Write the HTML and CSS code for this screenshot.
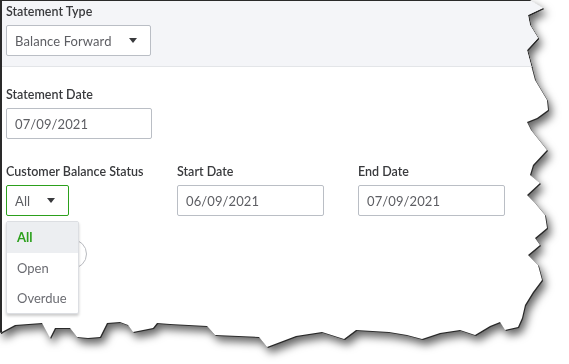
FILE: index.html
```html
<!DOCTYPE html>
<html lang="en">
<head>
  <meta charset="UTF-8" />
  <title>Statement Options</title>
  <link rel="stylesheet" href="styles.css">
</head>
<body>
  <div class="page">
    <div class="sheet">

      <!-- Tipo de extrato -->
      <div class="band">
        <label class="field-label">Statement Type</label>
        <div class="select select-type">
          <span>Balance Forward</span>
          <svg class="caret" width="8" height="5" viewBox="0 0 8 5"><path d="M0 0h8L4 5z" fill="#393a3d"/></svg>
        </div>
      </div>

      <div class="section">
        <label class="field-label">Statement Date</label>
        <div class="input date-single">07/09/2021</div>
      </div>

      <div class="section row">
        <div class="col">
          <label class="field-label">Customer Balance Status</label>
          <div class="select-wrap">
            <div class="select select-status">
              <span>All</span>
              <svg class="caret" width="8" height="5" viewBox="0 0 8 5"><path d="M0 0h8L4 5z" fill="#393a3d"/></svg>
            </div>
            <ul class="menu">
              <li class="menu-item selected">All</li>
              <li class="menu-item">Open</li>
              <li class="menu-item">Overdue</li>
            </ul>
          </div>
        </div>
        <div class="col">
          <label class="field-label">Start Date</label>
          <div class="input">06/09/2021</div>
        </div>
        <div class="col">
          <label class="field-label">End Date</label>
          <div class="input">07/09/2021</div>
        </div>
      </div>

      <div class="section">
        <button class="btn-apply">Apply</button>
      </div>

    </div>
  </div>
</body>
</html>
```

FILE: styles.css
```css
body {
  margin: 0;
  background-color: #ffffff;
  font-family: Lato, "Open Sans", Arial, sans-serif;
  font-size: 13px;
  color: #393a3d;
}

/* papel rasgado: o contorno e a sombra vem do filtro */
.page {
  width: 569px;
  height: 364px;
  filter: drop-shadow(1px 1px 0 #2a2a2a) drop-shadow(3px 5px 4px rgba(0, 0, 0, 0.6));
}

.sheet {
  height: 350px;
  background-color: #ffffff;
  border-top: 1px solid #2a2a2a;
  border-left: 2px solid #2a2a2a;
  box-sizing: border-box;
  clip-path: polygon(
    0 0, 530px 0, 543px 8px, 528px 15px, 530px 25px, 538px 38px, 527px 50px,
    531px 65px, 535px 80px, 547px 100px, 548px 110px, 537px 118px, 527px 122px,
    531px 130px, 547px 150px, 533px 165px, 530px 175px, 540px 183px, 527px 195px,
    535px 203px, 545px 215px, 547px 228px, 535px 238px, 540px 245px, 528px 255px,
    538px 265px, 542px 280px, 533px 292px, 525px 305px, 522px 318px, 518px 327px,
    505px 330px, 500px 322px, 490px 326px, 475px 335px, 460px 330px, 440px 333px,
    422px 339px, 407px 335px, 389px 332px, 356px 330px, 344px 339px, 322px 332px,
    296px 336px, 267px 347px, 259px 337px, 215px 335px, 207px 326px, 170px 324px,
    157px 323px, 153px 328px, 133px 332px, 128px 325px, 120px 322px, 107px 323px,
    100px 337px, 88px 338px, 77px 337px, 70px 328px, 55px 328px, 50px 338px,
    42px 323px, 15px 325px, 0 333px
  );
}

.band {
  background-color: #f4f5f8;
  border-bottom: 1px solid #e3e5e8;
  padding: 3px 0 10px 4px;
}

.section {
  padding-left: 4px;
  margin-top: 20px;
}

.row {
  display: grid;
  grid-template-columns: 171px 181px 147px;
  margin-top: 25px;
}

.field-label {
  display: block;
  font-size: 12.5px;
  font-weight: 600;
  line-height: 16px;
  margin-bottom: 5px;
  color: #393a3d;
  white-space: nowrap;
}

.input,
.select {
  height: 31px;
  box-sizing: border-box;
  border: 1px solid #babec5;
  border-radius: 2px;
  background-color: #ffffff;
  padding: 0 8px;
  display: flex;
  align-items: center;
  color: #5d5e63;
  letter-spacing: 0.1px;
}

.input {
  width: 147px;
}

.date-single {
  width: 146px;
}

.select {
  justify-content: space-between;
}

.select-type {
  width: 145px;
  padding-right: 13px;
}

.select-status {
  width: 63px;
  border-color: #2ca01c;
  padding-right: 13px;
}

.caret {
  display: block;
}

.select-wrap {
  position: relative;
}

.menu {
  position: absolute;
  top: 36px;
  left: 0;
  width: 73px;
  margin: 0;
  padding: 0;
  list-style: none;
  background-color: #ffffff;
  border: 1px solid #dcdee2;
  border-radius: 2px;
  box-shadow: 0 2px 3px rgba(0, 0, 0, 0.2);
  box-sizing: border-box;
  z-index: 10;
}

.menu-item {
  height: 30px;
  line-height: 30px;
  padding-left: 10px;
  color: #6b6c72;
}

.menu-item.selected {
  height: 31px;
  background-color: #eceef1;
  color: #2ca01c;
  font-weight: 700;
}

.btn-apply {
  margin-top: 3px;
  width: 81px;
  height: 30px;
  border: 1px solid #b8babf;
  border-radius: 15px;
  background-color: #ffffff;
  font-family: inherit;
  font-size: 13px;
  color: #393a3d;
}
```
